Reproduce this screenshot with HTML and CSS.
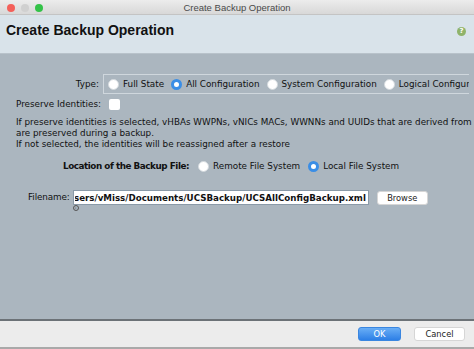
FILE: index.html
```html
<!DOCTYPE html>
<html lang="en">
<head>
    <meta charset="UTF-8">
    <title>Create Backup Operation</title>
    <link rel="stylesheet" href="styles.css">
</head>
<body>
    <div class="window">
        <!-- title bar -->
        <div class="titlebar">
            <div class="lights">
                <span class="light red"></span>
                <span class="light grey"></span>
                <span class="light green"></span>
            </div>
            <div class="wintitle">Create Backup Operation</div>
        </div>

        <!-- header -->
        <div class="header">
            <h1>Create Backup Operation</h1>
            <span class="help">?</span>
        </div>

        <!-- form -->
        <div class="content">
            <div class="type-row">
                <span class="type-label">Type:</span>
                <div class="radio-group">
                    <label class="radio"><span class="dot"></span>Full State</label>
                    <label class="radio checked"><span class="dot"></span>All Configuration</label>
                    <label class="radio"><span class="dot"></span>System Configuration</label>
                    <label class="radio"><span class="dot"></span>Logical Configuration</label>
                </div>
            </div>

            <div class="preserve-row">
                <span>Preserve Identities:</span>
                <span class="checkbox"></span>
            </div>

            <p class="note">
                If preserve identities is selected, vHBAs WWPNs, vNICs MACs, WWNNs and UUIDs that are derived from<br>
                are preserved during a backup.<br>
                If not selected, the identities will be reassigned after a restore
            </p>

            <div class="location-row">
                <span class="location-label">Location of the Backup File:</span>
                <label class="radio"><span class="dot"></span>Remote File System</label>
                <label class="radio checked"><span class="dot"></span>Local File System</label>
            </div>

            <div class="file-row">
                <span class="file-label">Filename:</span>
                <div class="file-field">
                    <input id="filename" class="file-input" type="text" readonly
                           value="/Users/vMiss/Documents/UCSBackup/UCSAllConfigBackup.xml">
                    <span class="info">i</span>
                </div>
                <button class="btn">Browse</button>
            </div>
        </div>

        <!-- footer -->
        <div class="footer">
            <button class="btn primary">OK</button>
            <button class="btn">Cancel</button>
        </div>
    </div>

    <script>
        // show the end of the path, like the native field does
        const filename = document.getElementById('filename');
        filename.scrollLeft = filename.scrollWidth;
    </script>
</body>
</html>
```

FILE: styles.css
```css
body {
    margin: 0;
    font-family: "DejaVu Sans", sans-serif;
    background-color: #abb6bf;
    overflow: hidden;
}
.window {
    display: flex;
    flex-direction: column;
    width: 474px;
    height: 349px;
}
.titlebar {
    position: relative;
    height: 15px;
    background: linear-gradient(#ececec, #d8d8d8);
    border-bottom: 1px solid #c4c4c4;
    box-sizing: border-box;
}
.lights {
    display: flex;
    gap: 6px;
    padding: 4px 0 0 7px;
}
.light {
    width: 8px;
    height: 8px;
    border-radius: 50%;
}
.red { background-color: #f4605a; }
.grey { background-color: #d0d0d0; }
.green { background-color: #33c248; }
.wintitle {
    position: absolute;
    top: 0;
    left: 0;
    right: 0;
    text-align: center;
    font-family: "Liberation Sans", sans-serif;
    font-size: 9.5px;
    line-height: 15px;
    color: #4a4a4a;
}
.header {
    display: flex;
    justify-content: space-between;
    align-items: flex-start;
    height: 39px;
    box-sizing: border-box;
    padding: 7px 8px 0 6px;
    background-color: #d9e3ea;
    border-bottom: 1px solid #b8c2ca;
}
.header h1 {
    margin: 0;
    font-family: "Liberation Sans", sans-serif;
    font-size: 14px;
    font-weight: bold;
    color: #111;
}
.help {
    width: 9px;
    height: 9px;
    margin-top: 5px;
    border-radius: 50%;
    background-color: #8fb36a;
    color: #fff;
    font-size: 7px;
    font-weight: bold;
    line-height: 9px;
    text-align: center;
}
.content {
    flex: 1;
    padding-top: 20px;
    font-size: 8.8px;
    color: #111;
}
.type-row {
    display: flex;
    align-items: center;
    height: 20px;
}
.type-label {
    width: 103px;
    text-align: right;
    padding-right: 4px;
    box-sizing: border-box;
}
.radio-group {
    display: flex;
    align-items: center;
    gap: 7px;
    width: 366px;
    height: 20px;
    box-sizing: border-box;
    padding-left: 4px;
    border: 1px solid #cfd7dd;
    border-right: none;
    overflow: hidden;
    white-space: nowrap;
}
.radio {
    display: flex;
    align-items: center;
    gap: 4px;
    white-space: nowrap;
}
.dot {
    flex: none;
    width: 11px;
    height: 11px;
    border-radius: 50%;
    background-color: #fff;
    box-sizing: border-box;
    border: 1px solid #d4dade;
}
.radio.checked .dot {
    border: 3.5px solid #3a8ee6;
    background-color: #fff;
}
.preserve-row {
    display: flex;
    align-items: center;
    gap: 8px;
    margin: 4px 0 0 16px;
    height: 12px;
}
.checkbox {
    width: 11px;
    height: 11px;
    border-radius: 2px;
    background-color: #fff;
}
.note {
    margin: 7px 0 0 16px;
    line-height: 11px;
    white-space: nowrap;
}
.location-row {
    display: flex;
    align-items: center;
    gap: 8px;
    margin: 10px 0 0 63px;
    height: 12px;
}
.location-label {
    font-weight: bold;
    letter-spacing: -0.45px;
    margin-right: 1px;
}
.file-row {
    display: flex;
    align-items: flex-start;
    margin: 18px 0 0 28px;
}
.file-label {
    line-height: 15px;
    margin-right: 3px;
    letter-spacing: -0.1px;
}
.file-field {
    display: flex;
    flex-direction: column;
}
.file-input {
    width: 296px;
    height: 15px;
    box-sizing: border-box;
    margin: 0;
    padding: 0 2px 0 1px;
    background-color: #fff;
    border: 1px solid #8a9aa8;
    outline: none;
    font-family: "DejaVu Sans", sans-serif;
    font-weight: bold;
    font-size: 8.7px;
    color: #111;
}
.info {
    width: 4px;
    height: 4px;
    border: 1px solid #555;
    border-radius: 50%;
    font-size: 3px;
    line-height: 4px;
    text-align: center;
}
.btn {
    height: 14px;
    padding: 0;
    width: 51px;
    margin-left: 8px;
    margin-top: 1px;
    border: 1px solid #d6d6d6;
    border-radius: 3px;
    background-color: #fff;
    font-family: "DejaVu Sans", sans-serif;
    font-size: 8.3px;
    color: #222;
}
.footer {
    display: flex;
    justify-content: flex-end;
    align-items: center;
    gap: 13px;
    height: 30px;
    box-sizing: border-box;
    padding-right: 9px;
    background-color: #ececec;
    border-top: 2px solid #6c7277;
    border-bottom: 2px solid #a9a9a9;
}
.footer .btn {
    margin: 0;
}
.btn.primary {
    width: 43px;
    background: linear-gradient(#69aef6, #2d7fe6);
    border-color: #3a86e0;
    color: #fff;
}
```
